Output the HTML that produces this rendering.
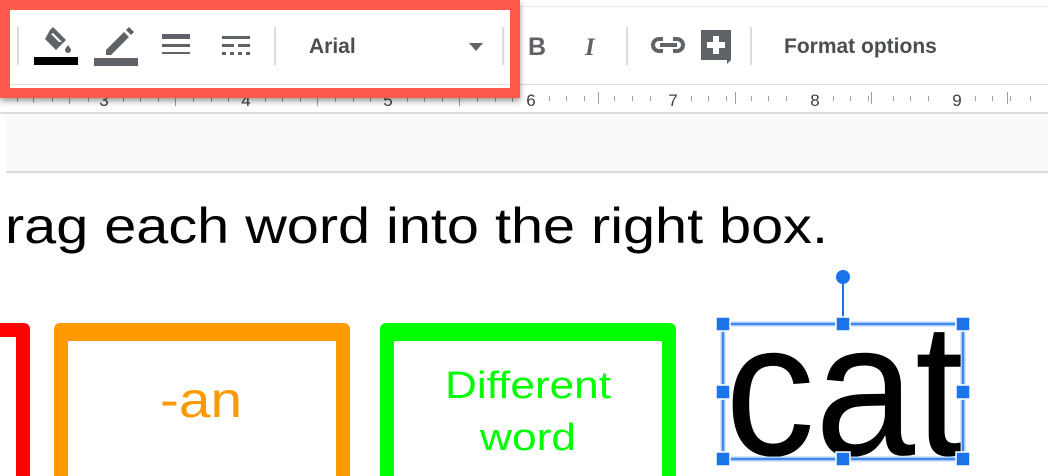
<!DOCTYPE html>
<html style="width:1048px;height:476px;overflow:hidden"><head><meta charset="utf-8"><style>
body{margin:0;width:1048px;height:476px;overflow:hidden;background:#fff;font-family:"Liberation Sans",sans-serif;position:relative}
.abs{position:absolute}
</style></head><body>
<div class="abs" style="left:0;top:0;width:1048px;height:84px;background:#fff;border-bottom:1px solid #dadce0"></div>
<div class="abs" style="left:0;top:6px;width:1048px;height:1px;background:#e8eaed"></div>
<div class="abs" style="left:0;top:85px;width:1048px;height:27px;background:#fff;border-bottom:2px solid #dadce0"></div>
<svg class="abs" style="left:0;top:85px" width="1048" height="27">
<g fill="#9aa0a6">
<rect x="17" y="13" width="1" height="4"/><rect x="33" y="12" width="1" height="6"/><rect x="52" y="13" width="1" height="4"/><rect x="69" y="11" width="1" height="8"/><rect x="88" y="13" width="1" height="4"/>
<rect x="123" y="13" width="1" height="4"/><rect x="140" y="13" width="1" height="4"/><rect x="158" y="13" width="1" height="4"/><rect x="175" y="9" width="1" height="12"/><rect x="193" y="13" width="1" height="4"/><rect x="211" y="13" width="1" height="4"/><rect x="228" y="13" width="1" height="4"/>
<rect x="265" y="13" width="1" height="4"/><rect x="282" y="13" width="1" height="4"/><rect x="300" y="13" width="1" height="4"/><rect x="317" y="9" width="1" height="12"/><rect x="335" y="13" width="1" height="4"/><rect x="353" y="13" width="1" height="4"/><rect x="370" y="13" width="1" height="4"/>
<rect x="407" y="13" width="1" height="4"/><rect x="424" y="13" width="1" height="4"/><rect x="442" y="13" width="1" height="4"/><rect x="459" y="9" width="1" height="12"/><rect x="477" y="13" width="1" height="4"/><rect x="495" y="13" width="1" height="4"/><rect x="512" y="13" width="1" height="4"/>
<rect x="549" y="11" width="1" height="5"/><rect x="566" y="11" width="1" height="5"/><rect x="584" y="11" width="1" height="5"/><rect x="598" y="7" width="1" height="12"/><rect x="614" y="11" width="1" height="5"/><rect x="632" y="11" width="1" height="5"/><rect x="650" y="11" width="1" height="5"/>
<rect x="691" y="11" width="1" height="5"/><rect x="708" y="11" width="1" height="5"/><rect x="726" y="11" width="1" height="5"/><rect x="735" y="7" width="1" height="12"/><rect x="751" y="11" width="1" height="5"/><rect x="768" y="11" width="1" height="5"/><rect x="786" y="11" width="1" height="5"/>
<rect x="833" y="11" width="1" height="5"/><rect x="850" y="11" width="1" height="5"/><rect x="868" y="11" width="1" height="5"/><rect x="871" y="7" width="1" height="12"/><rect x="893" y="11" width="1" height="5"/><rect x="910" y="11" width="1" height="5"/><rect x="928" y="11" width="1" height="5"/>
<rect x="975" y="11" width="1" height="5"/><rect x="992" y="11" width="1" height="5"/><rect x="1010" y="11" width="1" height="5"/><rect x="1007" y="7" width="1" height="12"/><rect x="1030" y="11" width="1" height="5"/>
</g>
<g fill="#3c4043" font-size="17" text-anchor="middle">
<text x="104" y="21">3</text><text x="246" y="21">4</text><text x="388" y="21">5</text><text x="531" y="21">6</text><text x="673" y="21">7</text><text x="815" y="21">8</text><text x="957" y="21">9</text>
</g></svg>
<div class="abs" style="left:6px;top:114px;width:1042px;height:57px;background:#f8f9fa;border-bottom:2px solid #dadce0"></div>

<svg class="abs" style="left:0;top:0" width="1048" height="84">
<g fill="#5f6368">
<rect x="17" y="27" width="2" height="38" fill="#dadce0"/>
<path d="M50 30 l3-3 13 13 -10 10 -11 -11 z M47 39 h18 l-9 9 z" />
<path d="M53 33 l9 9 -3 0 -8 -8z" fill="#fff"/>
<path d="M68 45 c2 3 3 4 3 5 a3 3 0 0 1 -6 0 c0-1 1-2 3-5z"/>
<rect x="34" y="57" width="44" height="8" fill="#000"/>
<path d="M106 50 l18-18 5 5 -18 18 h-5z M126 30 l3-3 5 5 -3 3z"/>
<rect x="94" y="58" width="44" height="8"/>
<rect x="162" y="34" width="28" height="5"/><rect x="162" y="44" width="28" height="3"/><rect x="162" y="52" width="28" height="2"/>
<rect x="222" y="36" width="28" height="3"/><rect x="222" y="44" width="12" height="3"/><rect x="238" y="44" width="12" height="3"/>
<rect x="222" y="52" width="4" height="3"/><rect x="230" y="52" width="4" height="3"/><rect x="238" y="52" width="4" height="3"/><rect x="246" y="52" width="4" height="3"/>
<rect x="274" y="27" width="2" height="38" fill="#dadce0"/>
<path d="M469 43 h14 l-7 8z"/>
<rect x="502" y="27" width="2" height="38" fill="#dadce0"/>
<rect x="626" y="27" width="2" height="38" fill="#dadce0"/>
<rect x="750" y="27" width="2" height="38" fill="#dadce0"/>
<path d="M701 30 h30 v30 l-4 4 v-4 h-26z"/>
<rect x="713" y="36" width="6" height="18" fill="#fff"/><rect x="707" y="42" width="18" height="6" fill="#fff"/>
</g>
<g fill="none" stroke="#5f6368" stroke-width="4">
<path d="M663 39 h-4 a6 6 0 0 0 0 12 h4 M673 39 h4 a6 6 0 0 1 0 12 h-4"/>
<path d="M660 45 h17"/>
</g>
<g fill="#5f6368" font-weight="bold" font-size="25">
<text x="528" y="55">B</text>
<text x="585" y="55" font-style="italic" font-family="Liberation Serif">I</text>
</g>
<g fill="#3c4043" font-size="21" font-weight="bold" opacity="0.92">
<text x="309" y="53">Arial</text>
<text x="784" y="53">Format options</text>
</g>
</svg>

<div class="abs" style="left:0;top:0;width:500px;height:78px;border:10px solid #fe574b;box-shadow:0 3px 6px rgba(0,0,0,.4)"></div>

<svg class="abs" style="left:0;top:180px" width="1048" height="90">
<text x="5" y="63" font-size="50" fill="#000" textLength="823" lengthAdjust="spacingAndGlyphs">rag each word into the right box.</text>
</svg>

<div class="abs" style="left:0;top:323px;width:1048px;height:153px;overflow:hidden">
<div class="abs" style="left:-44px;top:0;width:46px;height:200px;border:14px solid #ff0000;border-radius:6px"></div>
<div class="abs" style="left:54px;top:0;width:268px;height:200px;border:14px solid #ff9900;border-top-width:18px;border-radius:6px"></div>
<div class="abs" style="left:380px;top:0;width:268px;height:200px;border:14px solid #00ff00;border-top-width:18px;border-radius:6px"></div>
</div>
<svg class="abs" style="left:0;top:340px" width="1048" height="136">
<text x="201" y="77" font-size="50" fill="#ff9900" text-anchor="middle" textLength="82" lengthAdjust="spacingAndGlyphs">-an</text>
<text x="528" y="58" font-size="38" fill="#00ff00" text-anchor="middle" textLength="166" lengthAdjust="spacingAndGlyphs">Different</text>
<text x="528" y="110" font-size="38" fill="#00ff00" text-anchor="middle" textLength="96" lengthAdjust="spacingAndGlyphs">word</text>
</svg>

<svg class="abs" style="left:700px;top:260px" width="300" height="216">
<text x="25" y="195" font-size="190" fill="#000" textLength="240" lengthAdjust="spacingAndGlyphs">cat</text>
<rect x="23" y="64" width="240" height="135" fill="none" stroke="#aecbfa" stroke-width="5"/>
<rect x="23" y="64" width="240" height="135" fill="none" stroke="#1a73e8" stroke-width="1.5"/>
<line x1="143" y1="17" x2="143" y2="64" stroke="#1a73e8" stroke-width="2"/>
<circle cx="143" cy="17" r="7" fill="#1a73e8"/>
<g fill="#1a73e8" stroke="#fff" stroke-width="1.5">
<rect x="16" y="57" width="14" height="14"/><rect x="136" y="57" width="14" height="14"/><rect x="256" y="57" width="14" height="14"/>
<rect x="16" y="125" width="14" height="14"/><rect x="256" y="125" width="14" height="14"/>
<rect x="16" y="192" width="14" height="14"/><rect x="136" y="192" width="14" height="14"/><rect x="256" y="192" width="14" height="14"/>
</g>
</svg>
</body></html>
